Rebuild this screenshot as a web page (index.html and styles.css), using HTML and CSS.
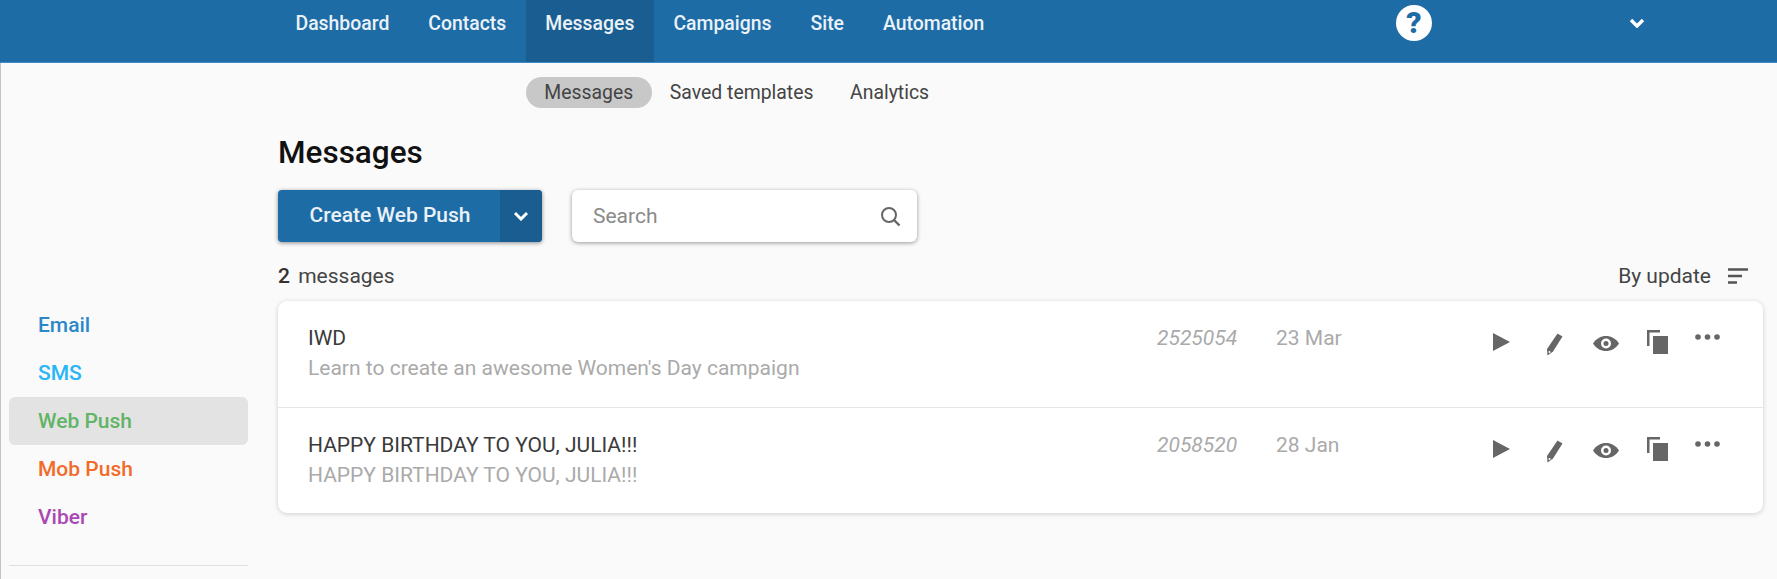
FILE: index.html
```html
<!DOCTYPE html>
<html lang="en">
<head>
  <meta charset="UTF-8">
  <meta name="viewport" content="width=device-width, initial-scale=1.0">
  <title>Messages</title>
  <link rel="stylesheet" href="styles.css">
</head>
<body>
  <header class="topbar">
    <nav class="topnav">
      <a href="#">Dashboard</a>
      <a href="#">Contacts</a>
      <a href="#" class="active">Messages</a>
      <a href="#">Campaigns</a>
      <a href="#">Site</a>
      <a href="#">Automation</a>
    </nav>
    <span class="help">?</span>
    <svg class="user-chevron" width="16" height="10" viewBox="0 0 16 10"><path d="M2 2l6 6 6-6" fill="none" stroke="#fff" stroke-width="3.400"/></svg>
  </header>

  <div class="layout">
    <aside class="sidebar">
      <ul class="channels">
        <li class="email">Email</li>
        <li class="sms">SMS</li>
        <li class="webpush current">Web Push</li>
        <li class="mobpush">Mob Push</li>
        <li class="viber">Viber</li>
      </ul>
      <div class="sidebar-line"></div>
    </aside>

    <main class="content">
      <nav class="subnav">
        <a href="#" class="active">Messages</a>
        <a href="#">Saved templates</a>
        <a href="#">Analytics</a>
      </nav>

      <h1>Messages</h1>

      <div class="toolbar">
        <div class="create-btn">
          <span class="create-label">Create Web Push</span>
          <span class="create-more">
            <svg width="16" height="10" viewBox="0 0 16 10"><path d="M2 2l6 6 6-6" fill="none" stroke="#fff" stroke-width="3"/></svg>
          </span>
        </div>
        <div class="search">
          <span>Search</span>
          <svg width="22" height="22" viewBox="0 0 22 22"><circle cx="10" cy="10" r="7" fill="none" stroke="#666" stroke-width="2"/><path d="M15 15l5.500 5.500" stroke="#666" stroke-width="2.400"/></svg>
        </div>
      </div>

      <div class="list-head">
        <div><b>2</b> messages</div>
        <div class="sort">
          By update
          <svg width="20" height="16" viewBox="0 0 20 16"><path d="M0 1.500h20M0 8h14M0 14.500h9" stroke="#555" stroke-width="2.400"/></svg>
        </div>
      </div>

      <div class="card">
        <div class="row">
          <div class="row-text">
            <div class="row-title">IWD</div>
            <div class="row-sub">Learn to create an awesome Women's Day campaign</div>
          </div>
          <div class="row-id">2525054</div>
          <div class="row-date">23 Mar</div>
          <div class="row-actions">
            <svg class="ic-play" width="17" height="18" viewBox="0 0 17 18"><path d="M0 0l17 9-17 9z" fill="#666"/></svg>
            <svg class="ic-pen" width="17" height="23" viewBox="0 0 17 23"><path d="M11.500 0.500l5 3-9.500 15-5.500 4-0.500-6.500z" fill="#666"/><circle cx="3.500" cy="19" r="1" fill="#fff"/></svg>
            <svg class="ic-eye" width="26" height="15" viewBox="0 0 26 15"><path d="M0 7.500C3 2.500 8 0 13 0s10 2.500 13 7.500C23 12.500 18 15 13 15S3 12.500 0 7.500z" fill="#666"/><circle cx="13" cy="7.500" r="5" fill="#fff"/><circle cx="13" cy="7.500" r="2.500" fill="#666"/></svg>
            <svg class="ic-copy" width="21" height="24" viewBox="0 0 21 24"><path d="M0 0h13v2.500H2.500V16H0z" fill="#666"/><path d="M6 6h15v18H6z" fill="#666"/></svg>
            <svg class="ic-dots" width="25" height="6" viewBox="0 0 25 6"><circle cx="3" cy="3" r="2.800" fill="#666"/><circle cx="12.500" cy="3" r="2.800" fill="#666"/><circle cx="22" cy="3" r="2.800" fill="#666"/></svg>
          </div>
        </div>
        <div class="row">
          <div class="row-text">
            <div class="row-title">HAPPY BIRTHDAY TO YOU, JULIA!!!</div>
            <div class="row-sub">HAPPY BIRTHDAY TO YOU, JULIA!!!</div>
          </div>
          <div class="row-id">2058520</div>
          <div class="row-date">28 Jan</div>
          <div class="row-actions">
            <svg class="ic-play" width="17" height="18" viewBox="0 0 17 18"><path d="M0 0l17 9-17 9z" fill="#666"/></svg>
            <svg class="ic-pen" width="17" height="23" viewBox="0 0 17 23"><path d="M11.500 0.500l5 3-9.500 15-5.500 4-0.500-6.500z" fill="#666"/><circle cx="3.500" cy="19" r="1" fill="#fff"/></svg>
            <svg class="ic-eye" width="26" height="15" viewBox="0 0 26 15"><path d="M0 7.500C3 2.500 8 0 13 0s10 2.500 13 7.500C23 12.500 18 15 13 15S3 12.500 0 7.500z" fill="#666"/><circle cx="13" cy="7.500" r="5" fill="#fff"/><circle cx="13" cy="7.500" r="2.500" fill="#666"/></svg>
            <svg class="ic-copy" width="21" height="24" viewBox="0 0 21 24"><path d="M0 0h13v2.500H2.500V16H0z" fill="#666"/><path d="M6 6h15v18H6z" fill="#666"/></svg>
            <svg class="ic-dots" width="25" height="6" viewBox="0 0 25 6"><circle cx="3" cy="3" r="2.800" fill="#666"/><circle cx="12.500" cy="3" r="2.800" fill="#666"/><circle cx="22" cy="3" r="2.800" fill="#666"/></svg>
          </div>
        </div>
      </div>
    </main>
  </div>
</body>
</html>
```

FILE: styles.css
```css
* {
  box-sizing: border-box;
}
html, body {
  height: 100%;
}
body {
  margin: 0;
  overflow: hidden;
  font-family: Roboto, Arial, sans-serif;
  font-size: 21px;
  color: #333;
  background-color: #fafafa;
}
a {
  text-decoration: none;
}

/* top bar */
.topbar {
  height: 63px;
  display: flex;
  align-items: stretch;
  padding-left: 276px;
  background-color: #1e6ca6;
  border-bottom: 1px solid #3d8ac4;
}
.topnav {
  display: flex;
}
.topnav a {
  padding: 0 19.500px;
  height: 62px;
  line-height: 47px;
  font-size: 19.400px;
  font-weight: 500;
  color: #eaf2f8;
}
.topnav a.active {
  background-color: #1a5e91;
}
.help {
  align-self: flex-start;
  margin: 5px 0 0 392px;
  width: 36px;
  height: 36px;
  border-radius: 50%;
  background-color: #fff;
  color: #1e6ca6;
  font-size: 30px;
  font-weight: 900;
  line-height: 36px;
  text-align: center;
}
.user-chevron {
  align-self: flex-start;
  margin: 18px 0 0 197px;
}

/* page */
.layout {
  display: flex;
  height: calc(100% - 63px);
  border-left: 1px solid #c4c4c4;
}
.sidebar {
  width: 277px;
  flex-shrink: 0;
  padding: 238px 30px 0 8px;
}
.channels {
  list-style: none;
  margin: 0;
  padding: 0;
}
.channels li {
  height: 48px;
  line-height: 48px;
  padding-left: 29px;
  border-radius: 6px;
  font-weight: 500;
}
.channels .current {
  background-color: #e3e3e3;
}
.email { color: #2b88c8; }
.sms { color: #29b6f6; }
.webpush { color: #62b466; }
.mobpush { color: #f26b2a; }
.viber { color: #ab47b2; }
.sidebar-line {
  margin-top: 24px;
  border-top: 1px solid #e0e0e0;
}

.content {
  flex: 1;
  padding: 14px 14px 0 0;
}
.subnav {
  display: flex;
  height: 31px;
  margin-left: 248px;
  align-items: center;
}
.subnav a {
  height: 31px;
  line-height: 31px;
  padding: 0 18.300px;
  font-size: 19.400px;
  color: #444;
}
.subnav a.active {
  background-color: #c8c8c8;
  border-radius: 16px;
}
h1 {
  margin: 27px 0 0;
  font-size: 31.500px;
  line-height: 36px;
  font-weight: 500;
  color: #111;
}
.toolbar {
  display: flex;
  gap: 30px;
  margin-top: 19px;
}
.create-btn {
  display: flex;
  width: 264px;
  height: 52px;
  border-radius: 4px;
  overflow: hidden;
  background-color: #1e6ca6;
  box-shadow: 0 1px 4px rgba(0, 0, 0, 0.45);
  color: #eaf2f8;
  font-weight: 500;
  line-height: 50px;
}
.create-label {
  flex: 1;
  text-align: center;
  padding-left: 2px;
}
.create-more {
  width: 42px;
  display: flex;
  align-items: center;
  justify-content: center;
  background-color: #1a5e91;
}
.search {
  width: 345px;
  height: 52px;
  display: flex;
  align-items: center;
  justify-content: space-between;
  padding: 0 16px 0 21px;
  background-color: #fff;
  border-radius: 6px;
  box-shadow: 0 1px 4px rgba(0, 0, 0, 0.4);
  color: #8a8a8a;
}
.list-head {
  display: flex;
  justify-content: space-between;
  align-items: center;
  height: 26px;
  margin-top: 21px;
  color: #444;
}
.list-head b {
  margin-right: 3px;
  font-weight: 500;
  color: #333;
}
.sort {
  display: flex;
  align-items: center;
  gap: 17px;
  padding-right: 15px;
}
.card {
  margin-top: 12px;
  background-color: #fff;
  border-radius: 9px;
  box-shadow: 0 1px 5px rgba(0, 0, 0, 0.18);
}
.row {
  height: 106px;
  display: flex;
  align-items: flex-start;
  padding: 22px 0 0 30px;
}
.row + .row {
  border-top: 1px solid #e6e6e6;
}
.row-text {
  flex: 1;
  line-height: 30px;
}
.row-title {
  color: #3a3a3a;
}
.row-sub {
  color: #aaa;
}
.row-id,
.row-date {
  line-height: 30px;
  color: #aaa;
}
.row-id {
  width: 119px;
  font-style: italic;
}
.row-date {
  width: 217px;
}
.row-actions {
  display: flex;
  align-items: flex-start;
  width: 270px;
  padding-top: 7px;
}
.ic-play { margin: 3px 36px 0 0; }
.ic-pen { margin: 3px 30px 0 0; }
.ic-eye { margin: 6px 28px 0 0; }
.ic-copy { margin: 0 27px 0 0; }
.ic-dots { margin-top: 4px; }
```
